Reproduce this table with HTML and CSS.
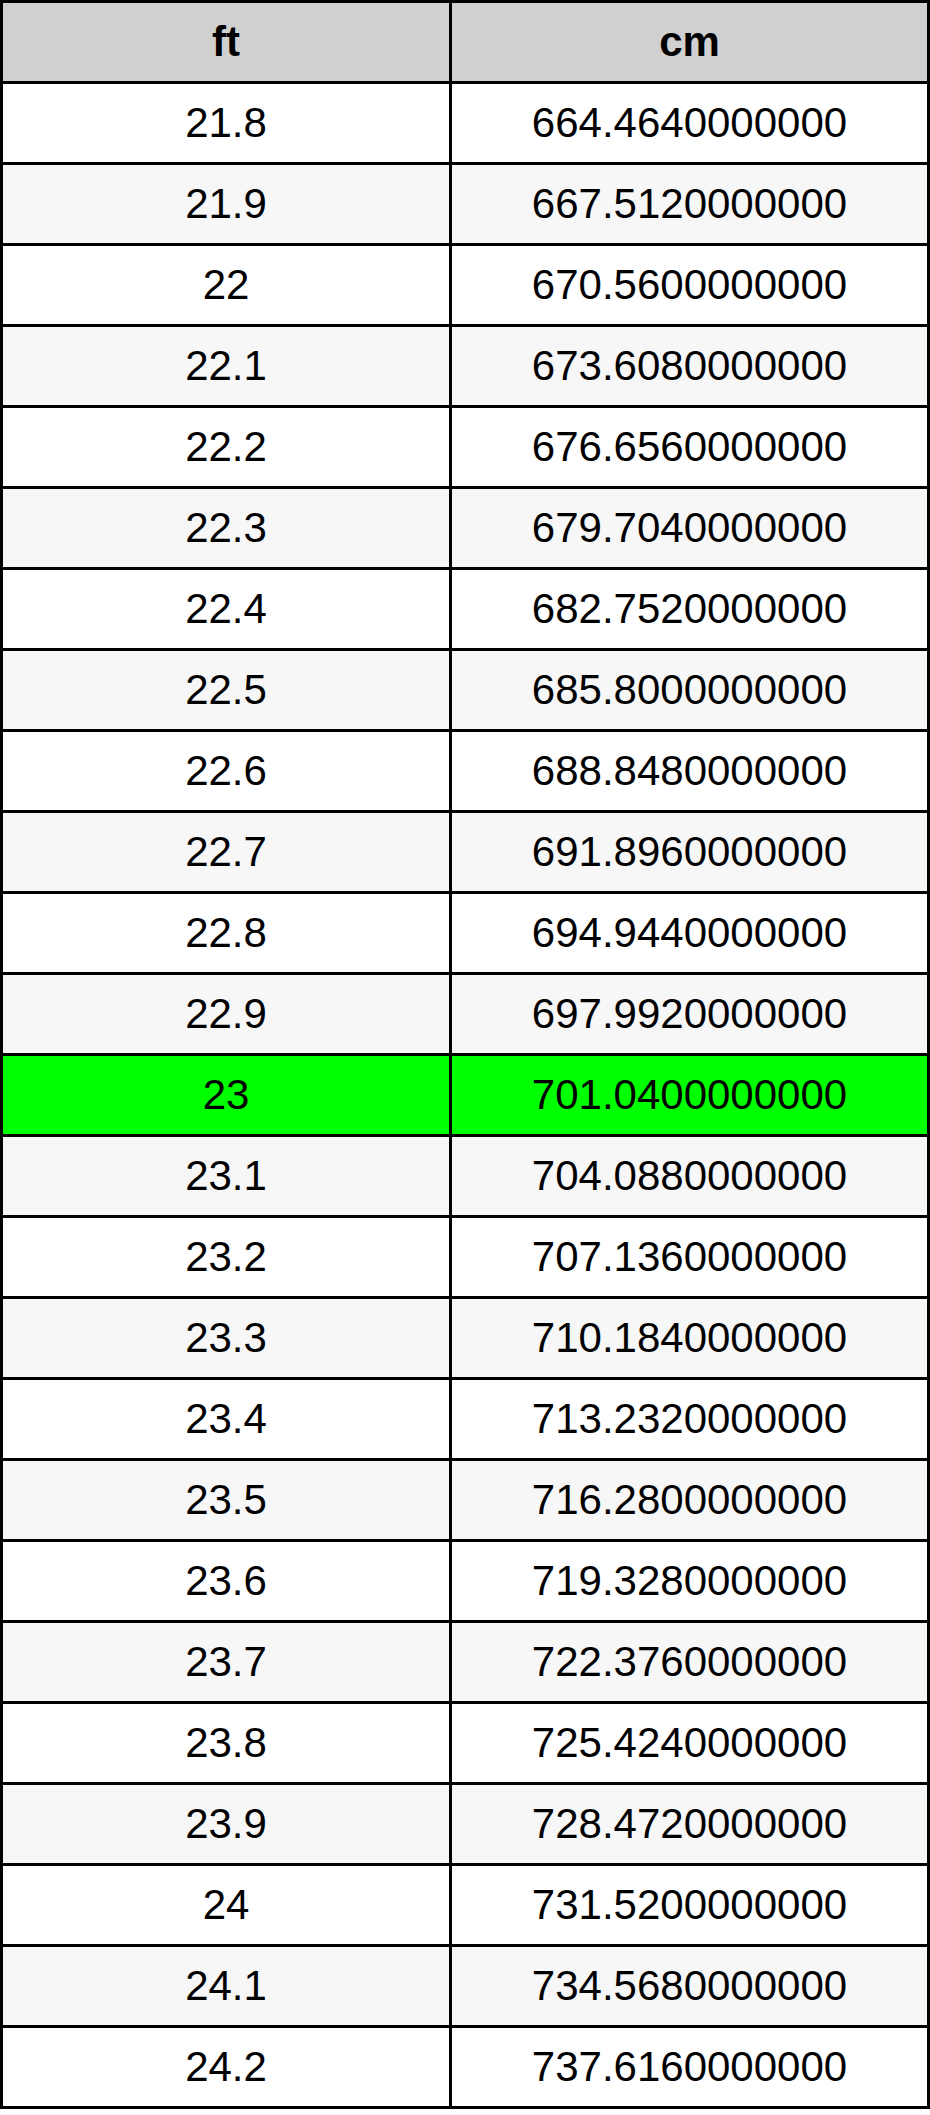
FILE: index.html
```html
<!DOCTYPE html>
<html>
<head>
<meta charset="utf-8">
<link rel="stylesheet" href="styles.css">
</head>
<body>
<div class="table">
  <div class="row head"><div class="cell">ft</div><div class="cell">cm</div></div>
  <div class="row"><div class="cell">21.8</div><div class="cell">664.4640000000</div></div>
  <div class="row"><div class="cell">21.9</div><div class="cell">667.5120000000</div></div>
  <div class="row"><div class="cell">22</div><div class="cell">670.5600000000</div></div>
  <div class="row"><div class="cell">22.1</div><div class="cell">673.6080000000</div></div>
  <div class="row"><div class="cell">22.2</div><div class="cell">676.6560000000</div></div>
  <div class="row"><div class="cell">22.3</div><div class="cell">679.7040000000</div></div>
  <div class="row"><div class="cell">22.4</div><div class="cell">682.7520000000</div></div>
  <div class="row"><div class="cell">22.5</div><div class="cell">685.8000000000</div></div>
  <div class="row"><div class="cell">22.6</div><div class="cell">688.8480000000</div></div>
  <div class="row"><div class="cell">22.7</div><div class="cell">691.8960000000</div></div>
  <div class="row"><div class="cell">22.8</div><div class="cell">694.9440000000</div></div>
  <div class="row"><div class="cell">22.9</div><div class="cell">697.9920000000</div></div>
  <div class="row hl"><div class="cell">23</div><div class="cell">701.0400000000</div></div>
  <div class="row"><div class="cell">23.1</div><div class="cell">704.0880000000</div></div>
  <div class="row"><div class="cell">23.2</div><div class="cell">707.1360000000</div></div>
  <div class="row"><div class="cell">23.3</div><div class="cell">710.1840000000</div></div>
  <div class="row"><div class="cell">23.4</div><div class="cell">713.2320000000</div></div>
  <div class="row"><div class="cell">23.5</div><div class="cell">716.2800000000</div></div>
  <div class="row"><div class="cell">23.6</div><div class="cell">719.3280000000</div></div>
  <div class="row"><div class="cell">23.7</div><div class="cell">722.3760000000</div></div>
  <div class="row"><div class="cell">23.8</div><div class="cell">725.4240000000</div></div>
  <div class="row"><div class="cell">23.9</div><div class="cell">728.4720000000</div></div>
  <div class="row"><div class="cell">24</div><div class="cell">731.5200000000</div></div>
  <div class="row"><div class="cell">24.1</div><div class="cell">734.5680000000</div></div>
  <div class="row"><div class="cell">24.2</div><div class="cell">737.6160000000</div></div>
</div>
</body>
</html>
```
FILE: styles.css
```css
html, body {
  margin: 0;
  padding: 0;
  background: #ffffff;
}
body {
  font-family: "Liberation Sans", Arial, sans-serif;
  color: #000000;
}
.table {
  width: 930px;
  background: #000000;
  padding: 3px;
  box-sizing: border-box;
  display: flex;
  flex-direction: column;
  gap: 3px;
}
.row {
  display: grid;
  grid-template-columns: 446px 475px;
  column-gap: 3px;
  height: 78px;
}
.cell {
  display: flex;
  align-items: center;
  justify-content: center;
  font-size: 42px;
  background: #ffffff;
}
.row:nth-child(odd) .cell {
  background: #f7f7f7;
}
.row.head .cell {
  background: #d0d0d0;
  font-weight: bold;
}
.row.hl .cell {
  background: #00ff00;
}
```
